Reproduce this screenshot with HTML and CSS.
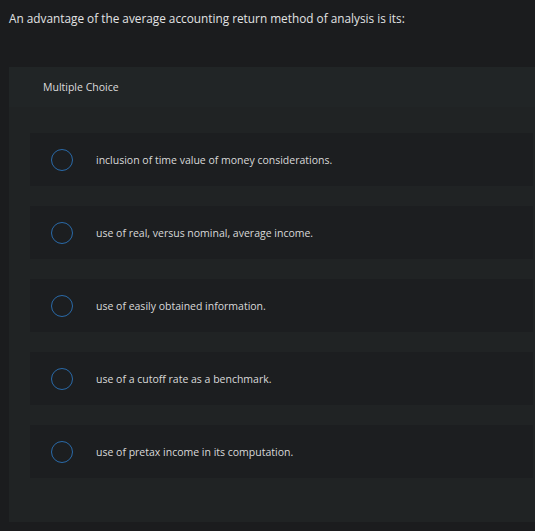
FILE: index.html
```html
<!DOCTYPE html>
<html>
<head>
<meta charset="utf-8">
<link rel="stylesheet" href="styles.css">
</head>
<body>
<div class="page">
  <p class="question">An advantage of the average accounting return method of analysis is its:</p>
  <div class="panel">
    <div class="panel-head">Multiple Choice</div>
    <div class="options">
      <div class="option"><span class="radio"></span><span class="label">inclusion of time value of money considerations.</span></div>
      <div class="option"><span class="radio"></span><span class="label">use of real, versus nominal, average income.</span></div>
      <div class="option"><span class="radio"></span><span class="label">use of easily obtained information.</span></div>
      <div class="option"><span class="radio"></span><span class="label">use of a cutoff rate as a benchmark.</span></div>
      <div class="option"><span class="radio"></span><span class="label">use of pretax income in its computation.</span></div>
    </div>
  </div>
</div>
</body>
</html>
```
FILE: styles.css
```css
html, body {
  margin: 0;
  padding: 0;
  background: #1b1c1e;
  overflow: hidden;
}
.page {
  width: 535px;
  height: 531px;
  padding: 0 0 0 9px;
  box-sizing: border-box;
  font-family: "Open Sans", "Liberation Sans", sans-serif;
}
.question {
  margin: 0;
  padding-top: 10px;
  height: 67px;
  box-sizing: border-box;
  font-size: 11.8px;
  line-height: 16px;
  color: #e2e3e4;
}
.panel {
  background: #202324;
  height: 455px;
  margin-right: -20px;
}
.panel-head {
  height: 40px;
  padding-left: 34px;
  font-size: 10.5px;
  line-height: 40px;
  color: #dcdcdc;
  background: #212526;
}
.options {
  padding: 26px 22px 0 21px;
  display: flex;
  flex-direction: column;
  gap: 20px;
}
.option {
  height: 53px;
  background: #1c1e20;
  display: flex;
  align-items: center;
  padding-left: 21px;
}
.radio {
  width: 20px;
  height: 20px;
  border: 1.5px solid #2a6aa8;
  border-radius: 50%;
  flex: none;
}
.label {
  margin-left: 23px;
  font-size: 10.5px;
  color: #d9d9d9;
}
```
